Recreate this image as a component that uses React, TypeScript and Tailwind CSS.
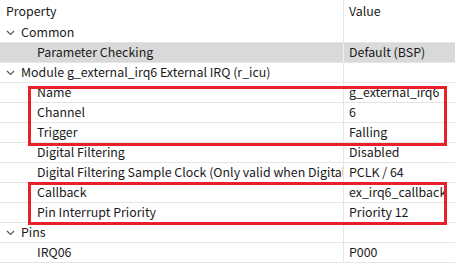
import React from "react";

type Row = { label: string; value?: string; level: 0 | 1; group?: boolean; selected?: boolean };

const rows: Row[] = [
  { label: "Common", level: 0, group: true },
  { label: "Parameter Checking", value: "Default (BSP)", level: 1, selected: true },
  { label: "Module g_external_irq6 External IRQ (r_icu)", level: 0, group: true },
  { label: "Name", value: "g_external_irq6", level: 1 },
  { label: "Channel", value: "6", level: 1 },
  { label: "Trigger", value: "Falling", level: 1 },
  { label: "Digital Filtering", value: "Disabled", level: 1 },
  { label: "Digital Filtering Sample Clock (Only valid when Digital Filtering is Enabled)", value: "PCLK / 64", level: 1 },
  { label: "Callback", value: "ex_irq6_callback", level: 1 },
  { label: "Pin Interrupt Priority", value: "Priority 12", level: 1 },
  { label: "Pins", level: 0, group: true },
  { label: "IRQ06", value: "P000", level: 1 },
];

function Chevron() {
  return (
    <svg width="9" height="6" viewBox="0 0 9 6" className="shrink-0">
      <path d="M1 1 L4.5 4.5 L8 1" fill="none" stroke="#555" strokeWidth="1.2" />
    </svg>
  );
}

export default function App() {
  return (
    <div
      className="relative w-[455px] h-[267px] bg-white overflow-hidden text-[12.4px] text-[#1a1a1a]"
      style={{ fontFamily: '"Noto Sans CJK SC", "Noto Sans", sans-serif' }}
    >
      <div className="flex h-[23px] items-center">
        <div className="w-[343px] pl-[6px] leading-none">Property</div>
        <div className="flex-1 h-full border-l border-[#e5e5e5] flex items-center pl-[5px] leading-none">Value</div>
      </div>
      {rows.map((r, i) => (
        <div
          key={i}
          className={`flex h-[20px] border-b border-[#e5e5e5] ${r.selected ? "bg-[#d9d9d9]" : ""}`}
        >
          <div className="w-[343px] flex items-center overflow-hidden whitespace-nowrap leading-none">
            {r.level === 0 ? (
              <div className="flex items-center">
                <div className="w-[21px] pl-[6px] flex items-center">
                  <Chevron />
                </div>
                <span>{r.label}</span>
              </div>
            ) : (
              <span className="pl-[37px]">{r.label}</span>
            )}
          </div>
          <div
            className={`flex-1 flex items-center pl-[5px] border-l whitespace-nowrap overflow-hidden leading-none ${
              r.selected ? "border-[#f0f0f0]" : "border-[#e5e5e5]"
            }`}
          >
            {r.value}
          </div>
        </div>
      ))}
      <div className="absolute left-[28px] top-[86px] w-[419px] h-[60px] border-[3px] border-[#e8202a]" />
      <div className="absolute left-[28px] top-[182px] w-[419px] h-[43px] border-[3px] border-[#e8202a]" />
    </div>
  );
}
